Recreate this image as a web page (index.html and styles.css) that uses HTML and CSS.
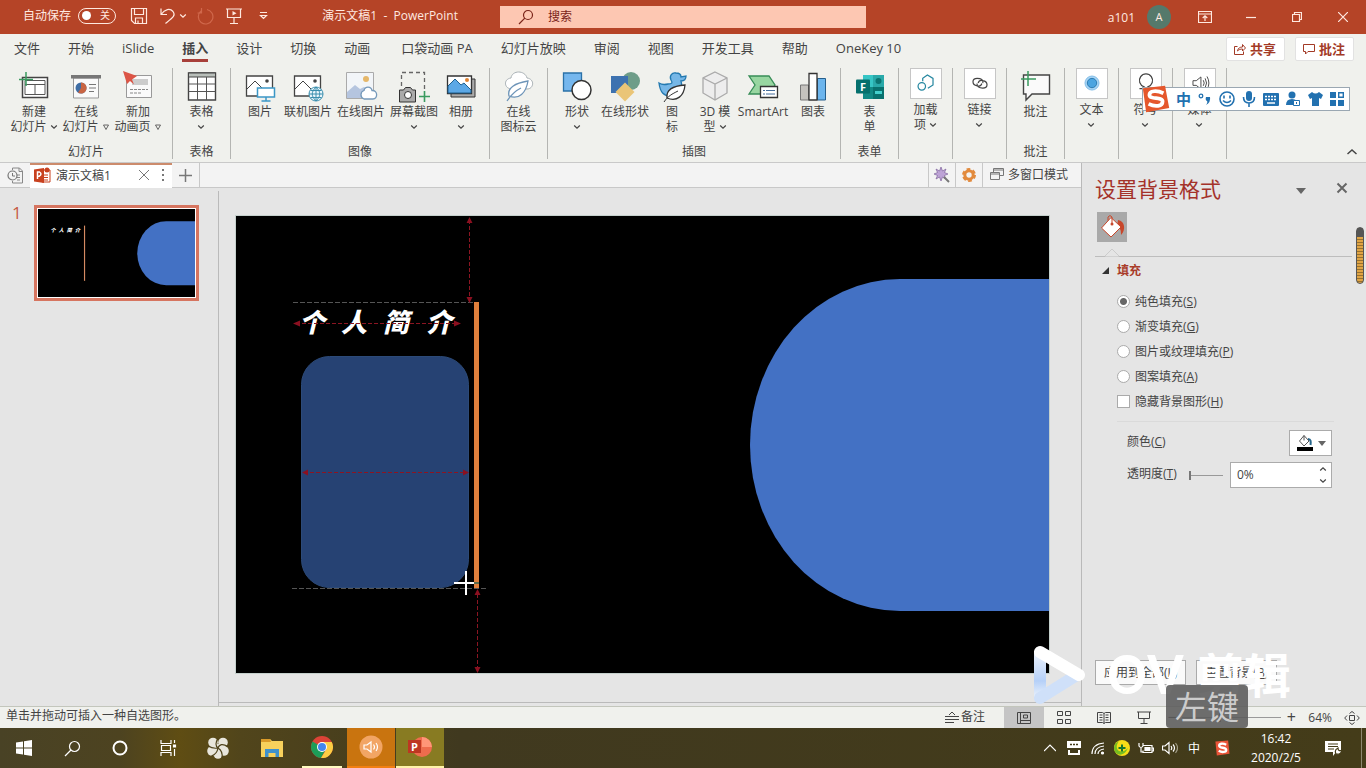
FILE: index.html
```html
<!DOCTYPE html>
<html lang="zh-CN">
<head>
<meta charset="utf-8">
<title>演示文稿1 - PowerPoint</title>
<link rel="stylesheet" href="styles.css">
</head>
<body>
<svg class="defs" aria-hidden="true">
  <symbol id="chev" viewBox="0 0 8 8"><path d="M1.200 2.500L4 5.200 6.800 2.500" fill="none" stroke="currentColor" stroke-width="1.200"/></symbol>
  <symbol id="tri" viewBox="0 0 8 8"><path d="M1.500 2h5L4 6.500z" fill="none" stroke="currentColor" stroke-width=".8"/></symbol>
</svg>

<header class="titlebar">
  <div class="quick">
    <span>自动保存</span>
    <label class="switch"><input type="checkbox" aria-label="自动保存"><span>关</span></label>
    <button class="tb save" aria-label="保存"><svg width="18" height="18" viewBox="0 0 18 18"><path d="M1.500 1.500h15v15h-12l-3-3zM4.500 1.500v6h9v-6M5.500 16.500v-5.500h7v5.500M8 16.500v-3" /></svg></button>
    <button class="tb undo" aria-label="撤消"><svg width="18" height="18" viewBox="0 0 18 18"><path d="M2 1.500v6h6M2 7.500C6 2 11 1 14 4.500c3 4 0 6-7.500 12"/></svg><svg class="chev" width="8" height="8"><use href="#chev"/></svg></button>
    <button class="tb redo" aria-label="恢复"><svg width="18" height="18" viewBox="0 0 18 18"><path d="M5.500 1v5h-4M11 2.500A7.300 7.300 0 1 1 5 4"/></svg></button>
    <button class="tb show" aria-label="从头开始"><svg width="18" height="18" viewBox="0 0 18 18"><path d="M1 2h16M2.500 2v8.500h13V2M9 10.500v6M5 16.500h8"/><path d="M7.500 4l4 2.200-4 2.300z" fill="currentColor" stroke="none"/></svg></button>
    <button class="tb" aria-label="自定义"><svg width="9" height="9" viewBox="0 0 9 9"><path d="M1 1.500h7M1.500 4.500l3 3 3-3z"/></svg></button>
    <h1>演示文稿1&nbsp; -&nbsp; PowerPoint</h1>
  </div>
  <label class="search"><svg width="16" height="16" viewBox="0 0 16 16"><circle cx="10" cy="6" r="4.500"/><path d="M6.800 9.200L1 15"/></svg><input type="text" placeholder="搜索" aria-label="搜索"></label>
  <div class="account">
    <span>a101</span><span class="avatar">A</span>
    <button class="win" aria-label="功能区显示选项"><svg width="14" height="12" viewBox="0 0 14 12"><path d="M.5.500h13v11H.5zM.5 3h13M7 10V5M4.700 7L7 4.800 9.300 7"/></svg></button>
    <button class="win" aria-label="最小化"><svg width="10" height="10" viewBox="0 0 10 10"><path d="M0 5.500h10"/></svg></button>
    <button class="win" aria-label="还原"><svg width="10" height="10" viewBox="0 0 10 10"><path d="M.5 2.500h7v7h-7zM2.500 2.500v-2h7v7h-2"/></svg></button>
    <button class="win" aria-label="关闭"><svg width="10" height="10" viewBox="0 0 10 10"><path d="M0 0l10 10M10 0L0 10"/></svg></button>
  </div>
</header>

<nav class="tabs">
  <a href="#">文件</a><a href="#">开始</a><a href="#">iSlide</a><a href="#" class="on">插入</a><a href="#">设计</a><a href="#">切换</a><a href="#">动画</a><a href="#" class="wide">口袋动画 PA</a><a href="#">幻灯片放映</a><a href="#">审阅</a><a href="#">视图</a><a href="#">开发工具</a><a href="#">帮助</a><a href="#">OneKey 10</a>
  <div class="share">
    <button><svg width="12" height="12" viewBox="0 0 12 12"><path d="M3.500 3.500h-3v8h9V8.500M3.500 8c.5-3 2.500-4 5-4V1.500L11.500 5 8.500 8V6c-2 0-3.500.5-5 2z"/></svg>共享</button>
    <button><svg width="12" height="12" viewBox="0 0 12 12"><path d="M.5 1.500h11v7H5l-2.500 2.500V8.500h-2z"/></svg>批注</button>
  </div>
</nav>

<section class="ribbon" aria-label="插入">
  <div class="group g-slides">
    <div class="items">
      <button class="w52"><svg class="ico" viewBox="0 0 30 30"><path d="M3.500 6.500h25v20h-25z" fill="#fff" stroke="#444" stroke-width="1.500"/><path d="M6 9.500h20v14H6zM6 13.500h20M16 13.500v10" fill="none" stroke="#555"/><path d="M7 1v14M0 8.500h14" stroke="#3a9a5f" stroke-width="1.500"/></svg><span>新建<br>幻灯片 <svg class="mark"><use href="#chev"/></svg></span></button>
      <button class="w52"><svg class="ico" viewBox="0 0 30 30"><path d="M2.500 7h25v20h-25z" fill="#fafafa" stroke="#999"/><path d="M0 4h30v3.500H0z" fill="#777"/><circle cx="10" cy="17" r="5.500" fill="#3f6ea5"/><path d="M10 17V11.500a5.500 5.500 0 1 1-3 10z" fill="#c96442"/><path d="M18 13.500h7M18 17h7M18 20.500h5" stroke="#777"/></svg><span>在线<br>幻灯片 <svg class="mark"><use href="#tri"/></svg></span></button>
      <button class="w52"><svg class="ico" viewBox="0 0 30 30"><path d="M3.500 4.500h25v22h-25z" fill="#fafafa" stroke="#999"/><path d="M9 8h16v6H9z" fill="#ccc"/><path d="M7 18.500h18M7 22h12" stroke="#888" stroke-dasharray="3 1"/><path d="M0 0l14 5-5 3.500 2 5-4-3.500-3 3z" fill="#dc5546"/></svg><span>新加<br>动画页 <svg class="mark"><use href="#tri"/></svg></span></button>
    </div><div class="name">幻灯片</div>
  </div>
  <div class="group g58">
    <div class="items"><button class="w46"><svg class="ico" viewBox="0 0 30 30"><path d="M1.500 2h27v27h-27z" fill="#fff" stroke="#444" stroke-width="1.400"/><path d="M1.500 2h27v4h-27z" fill="#b9bfba" stroke="#444"/><path d="M1.500 13h27M1.500 20.500h27M10.500 6v23M19.500 6v23" stroke="#555"/></svg><span>表格<br><svg class="mark"><use href="#chev"/></svg></span></button></div><div class="name">表格</div>
  </div>
  <div class="group g-image">
    <div class="items">
      <button class="w46"><svg class="ico" viewBox="0 0 30 30"><path d="M1.500 5h26v20h-26z" fill="#fff" stroke="#444" stroke-width="1.300"/><path d="M2 18l8-8 9 9" fill="none" stroke="#444"/><circle cx="22" cy="10" r="1.800" fill="#444"/><path d="M12.500 17h17v9h-17z" fill="#fff" stroke="#3b97c6" stroke-width="1.500"/><path d="M21 26v4M16.500 30h9" stroke="#3b97c6" stroke-width="1.500"/></svg><span>图片</span></button>
      <button class="w50"><svg class="ico" viewBox="0 0 30 30"><path d="M1.500 5h26v20h-26z" fill="#fff" stroke="#444" stroke-width="1.300"/><path d="M2 18l8-8 9 9" fill="none" stroke="#444"/><circle cx="22" cy="10" r="1.800" fill="#444"/><circle cx="23" cy="23" r="7" fill="#e9f5fb" stroke="#3b8fae"/><path d="M16 23h14M17.500 19.500h11M17.500 26.500h11M23 16v14M23 16c-5 5-5 9 0 14M23 16c5 5 5 9 0 14" fill="none" stroke="#3b8fae"/></svg><span>联机图片</span></button>
      <button class="w56"><svg class="ico" viewBox="0 0 30 30"><path d="M.5 1.500h27v26H.5z" fill="#f2f5f8" stroke="#aaa"/><path d="M1 27v-6l8-7 5 4 4-2 8 5v6z" fill="#b5c5df"/><circle cx="20" cy="8" r="3" fill="#e5b76a"/><path d="M18 28a4.500 4.500 0 0 1 0-8.500c1-4.500 7-4.500 8 0 6-.5 6 8.500 1 8.500z" fill="#fff" stroke="#7599ba" stroke-width="1.300"/></svg><span>在线图片</span></button>
      <button class="w50"><svg class="ico" viewBox="0 0 30 30"><path d="M2.500 15V1.500h23V18" fill="none" stroke="#666" stroke-width="1.300" stroke-dasharray="4 3"/><path d="M.5 19h4l2-2.500h5l2 2.500h3v12H.5z" fill="#aaa" stroke="#333"/><circle cx="9" cy="24" r="3.500" fill="#fff" stroke="#333"/><path d="M25.500 20v11M20 25.500h11" stroke="#3a9a5f" stroke-width="1.600"/></svg><span>屏幕截图<br><svg class="mark"><use href="#chev"/></svg></span></button>
      <button class="w44"><svg class="ico" viewBox="0 0 30 30"><path d="M5 8h24v18H5z" fill="#aaa" stroke="#333"/><path d="M1.500 5h24v17.500h-24z" fill="#fff" stroke="#333" stroke-width="1.300"/><path d="M2 22v-7l7-7 6 6 3-2 7 7v3z" fill="#5ca8e6" stroke="#1e5f8d"/><circle cx="21" cy="9" r="2" fill="#df8333"/></svg><span>相册<br><svg class="mark"><use href="#chev"/></svg></span></button>
    </div><div class="name">图像</div>
  </div>
  <div class="group g58">
    <div class="items"><button class="w46"><svg class="ico" viewBox="0 0 30 30"><path d="M8 18c-8 0-9-10-1-11C8-1 21-1 23 7c8 1 7 11 0 11z" fill="#fff" stroke="#a9b1b5"/><path d="M5 25C3 17 11 12 24 10c-2 12-9 19-19 15z" fill="#fff" stroke="#6d94b8" stroke-width="1.300"/><path d="M3 30c4-6 8-10 14-13" fill="none" stroke="#6d94b8" stroke-width="1.300"/></svg><span>在线<br>图标云</span></button></div>
  </div>
  <div class="group g-illus">
    <div class="items">
      <button class="w48"><svg class="ico" viewBox="0 0 30 30"><path d="M1.500 2h18v18h-18z" fill="#75b7ee" stroke="#2a71a8" stroke-width="1.300"/><circle cx="19.500" cy="19" r="9.500" fill="#fff" stroke="#333" stroke-width="1.500"/></svg><span>形状<br><svg class="mark"><use href="#chev"/></svg></span></button>
      <button class="w48"><svg class="ico" viewBox="0 0 30 30"><circle cx="21" cy="10" r="9" fill="#6e9d89"/><path d="M1 5h17v17H1z" fill="#3d72b0"/><path d="M15 11.500L24.500 21 15 30.500 5.500 21z" fill="#eac577"/></svg><span>在线形状</span></button>
      <button class="w46"><svg class="ico" viewBox="0 0 30 30"><path d="M2 12c3 2 5 2 9 1 4 0 5-1 3-4-2-4 1-8 5-7 4 0 5 2 5 4l5-1c0 4-3 5-5 5 3 11-3 15-9 15C7 26 3 21 2 12z" fill="#76b7e7" stroke="#2379b0" stroke-width="1.300"/><path d="M10 27c-1-8 5-12 18-13-1 11-8 17-18 13z" fill="#fff" stroke="#333" stroke-width="1.300"/><path d="M7 31c4-6 8-8 14-11" fill="none" stroke="#333"/></svg><span>图<br>标</span></button>
      <button class="w40"><svg class="ico" viewBox="0 0 30 30"><path d="M15 1l12 6v15l-12 7-12-7V7z" fill="#ededed" stroke="#aaa" stroke-width="1.300"/><path d="M3 7l12 6 12-6M15 13v16" fill="none" stroke="#aaa" stroke-width="1.300"/></svg><span>3D 模<br>型 <svg class="mark"><use href="#chev"/></svg></span></button>
      <button class="w56"><svg class="ico" viewBox="0 0 30 30"><path d="M1 5h20l6 9-6 9H1l6-9z" fill="#98d6a1" stroke="#378d57" stroke-width="1.300"/><path d="M12.500 15.500h17v11h-17z" fill="#fff" stroke="#333" stroke-width="1.300"/><path d="M15 19.500h12M15 23h12" stroke="#446c9b" stroke-dasharray="2 1 9 0"/></svg><span>SmartArt</span></button>
      <button class="w44"><svg class="ico" viewBox="0 0 30 30"><path d="M2.500 14h8v15h-8z" fill="#c4c2be" stroke="#777"/><path d="M19.500 7.500h8V29h-8z" fill="#6cb5ed" stroke="#255f8c"/><path d="M11 2.500h8V29h-8z" fill="#fff" stroke="#333" stroke-width="1.300"/></svg><span>图表</span></button>
    </div><div class="name">插图</div>
  </div>
  <div class="group g58">
    <div class="items"><button class="w46"><svg class="ico" viewBox="0 0 30 30"><path d="M8 4h21v24H8z" fill="#29a9a9"/><path d="M8 4h10v12H8z" fill="#36c5c5"/><path d="M18 16h11v12H18z" fill="#08716e"/><path d="M8 16h10v12H8z" fill="#118985"/><circle cx="23.500" cy="10" r="3" fill="#0b7471"/><path d="M20 20h7v3h-7z" fill="#44d0cd"/><rect x="1" y="8.500" width="14" height="14" rx="1" fill="#05706d"/><text x="5" y="19.500" class="logo-f">F</text></svg><span>表<br>单</span></button></div><div class="name">表单</div>
  </div>
  <div class="group g54">
    <div class="items"><button class="small"><svg class="box" viewBox="0 0 32 31"><path d="M12.500 13V10l5-3.500 6 3.500v7l-5.500 3.500" fill="none" stroke="#2687a0" stroke-width="1.300"/><circle cx="11.500" cy="18.500" r="4" fill="none" stroke="#2687a0" stroke-width="1.300"/></svg><span>加载<br>项 <svg class="mark"><use href="#chev"/></svg></span></button></div>
  </div>
  <div class="group g54">
    <div class="items"><button class="small"><svg class="box" viewBox="0 0 32 31"><path d="M18 15.500a4 4 0 0 1-5 2.500c-6-1-6-8 0-8 4 0 7 1.500 6 5M14 15a4 4 0 0 1 5-2.500c6 1 6 8 0 8-4 0-7-2-6-5" fill="none" stroke="#444" stroke-width="1.300"/></svg><span>链接<br><svg class="mark"><use href="#chev"/></svg></span></button></div>
  </div>
  <div class="group g58">
    <div class="items"><button class="w46"><svg class="ico" viewBox="0 0 30 30"><path d="M2.500 4h26v19H11l-6 6v-6H2.500z" fill="#fafafa" stroke="#444" stroke-width="1.400"/><path d="M7 0v15M0 8h15" stroke="#3a9a5f" stroke-width="1.500"/></svg><span>批注</span></button></div><div class="name">批注</div>
  </div>
  <div class="group g54">
    <div class="items"><button class="small"><svg class="box" viewBox="0 0 32 31"><circle cx="16" cy="15" r="7.500" fill="#a8d4f4" stroke="#7fbbe6"/><circle cx="16" cy="15" r="5" fill="#4ba4e0" stroke="#2877ad"/></svg><span>文本<br><svg class="mark"><use href="#chev"/></svg></span></button></div>
  </div>
  <div class="group g54">
    <div class="items"><button class="small"><svg class="box" viewBox="0 0 32 31"><path d="M9 21h5v-2a7 7 0 1 1 4 0v2h5" fill="none" stroke="#444" stroke-width="1.400"/></svg><span>符号<br><svg class="mark"><use href="#chev"/></svg></span></button></div>
  </div>
  <div class="group g54">
    <div class="items"><button class="small"><svg class="box" viewBox="0 0 32 31"><path d="M8.500 12.500v5h3.500l5 4V8.500l-5 4zM19.500 12q2 3 0 6M21.500 10q3 5 0 10M23.500 8q4 7 0 14" fill="none" stroke="#444"/></svg><span>媒体<br><svg class="mark"><use href="#chev"/></svg></span></button></div>
  </div>
  <button class="fold" aria-label="折叠功能区"><svg width="12" height="8" viewBox="0 0 12 8"><path d="M1.500 6L6 2l4.500 4" fill="none" stroke="#444" stroke-width="1.500"/></svg></button>
</section>

<main class="work">
  <div class="editor">
    <div class="docbar">
      <button class="recent" aria-label="最近"><svg width="17" height="17" viewBox="0 0 17 17"><path d="M5.500 3V1h7l3 3v12h-10v-2M12 1v3.500h3.500M10 8h3M10 10.500h3M10 13h3" fill="none" stroke="#888"/><circle cx="5.500" cy="8.500" r="4.500" fill="#f4f4f4" stroke="#777" stroke-width="1.200"/><path d="M5.500 6v3h2.500" fill="none" stroke="#777"/></svg></button>
      <div class="doc">
        <svg width="17" height="17" viewBox="0 0 17 17"><path d="M8 3h8v12H8z" fill="#fff" stroke="#c8411f"/><path d="M10 8h4M10 10.500h4M10 13h4" stroke="#c8411f"/><circle cx="13" cy="3" r="2.500" fill="#c8411f"/><path d="M0 2.500L10 1v15L0 14.500z" fill="#c8411f"/><path d="M3.500 12V5h2q3 2-.2 4.200H3.500" fill="none" stroke="#fff" stroke-width="1.500"/></svg>
        <span>演示文稿1</span>
        <button aria-label="关闭标签"><svg width="12" height="12" viewBox="0 0 12 12"><path d="M1 1l10 10M11 1L1 11" stroke="#777"/></svg></button>
        <button aria-label="更多"><svg width="4" height="12" viewBox="0 0 4 12"><path d="M1 0h2v2H1zM1 5h2v2H1zM1 10h2v2H1z" fill="#777"/></svg></button>
      </div>
      <button class="add" aria-label="新建标签"><svg width="13" height="13" viewBox="0 0 13 13"><path d="M6.500 0v13M0 6.500h13" stroke="#777" stroke-width="1.500"/></svg></button>
      <button class="tool first" aria-label="工具"><svg width="16" height="16" viewBox="0 0 16 16"><path d="M7 0l1.500 4L12 2l-1.500 3.500L14 7l-3.500 1.500 1 3.500-3-2L7 14l-1.500-4L2 12l1.500-3.500L0 7l3.500-1.500L2 2l3.500 2z" fill="#bda3d6" stroke="#80649c" stroke-width=".7"/><path d="M10 10l5 5" stroke="#777" stroke-width="2"/></svg></button>
      <button class="tool" aria-label="设置"><svg width="16" height="16" viewBox="0 0 16 16"><circle cx="8" cy="8" r="4.200" fill="none" stroke="#e28a3d" stroke-width="3"/><circle cx="8" cy="8" r="5.800" fill="none" stroke="#e28a3d" stroke-width="2.400" stroke-dasharray="3.600 2.470"/></svg></button>
      <button class="multi"><svg width="14" height="12" viewBox="0 0 14 12"><path d="M3.500 4V.5h10v7H10M3.500 2h10M.5 4.500h9v7h-9zM.5 6h9" fill="none" stroke="#777"/></svg>多窗口模式</button>
    </div>
    <div class="panes">
      <aside class="thumbs">
        <span>1</span>
        <button class="thumb" aria-label="幻灯片 1"><svg viewBox="0 0 813 457"><path d="M0 0h813v457H0z"/><path d="M813 63H664a150 166 0 0 0 0 332h149z" fill="#4371c4"/><path d="M238 86h6v286h-6z" fill="#d58a62"/><text class="art" x="65 107 149 191" y="117">个人简介</text></svg></button>
      </aside>
      <div class="canvas">
        <svg class="slide" viewBox="0 0 813 457">
          <path d="M0 0h813v457H0z"/>
          <path d="M813 63H664a150 166 0 0 0 0 332h149z" fill="#4371c4"/>
          <path d="M238 86h5v286h-5z" fill="#df7f3c"/>
          <rect x="65.500" y="140.500" width="167" height="231" rx="28" fill="#264273" stroke="#2c4a78"/>
          <text class="art" x="63 105 147 190" y="116">个人简介</text>
          <path d="M57 86.500h181M56 372.500h194" stroke="#555" stroke-dasharray="5 2"/>
          <g stroke="#8b1522" stroke-dasharray="4 2"><path d="M233.500 4v80M241.500 378v76M60 107.500h162M68 256.500h164" fill="none"/></g>
          <path fill="#8b1020" d="M233.500 1l3 6h-6zM233.500 87l3-6h-6zM241.500 373l3 6h-6zM241.500 457l3-6h-6zM57 107.500l7-3v6zM225 107.500l-7-3v6zM66 256.500l6-3v6zM233 256.500l-6-3v6z"/>
          <path d="M218 367h22M230 355v24" stroke="#fff" stroke-width="2"/>
          <path d="M238 367h5" stroke="#5b6b4c" stroke-width="2"/>
        </svg>
      </div>
    </div>
  </div>

  <aside class="format">
    <div class="head"><h2>设置背景格式</h2><button aria-label="选项"><svg width="10" height="6" viewBox="0 0 10 6"><path d="M0 0h10L5 6z" fill="#666"/></svg></button><button aria-label="关闭窗格"><svg width="12" height="12" viewBox="0 0 12 12"><path d="M1.500 1.500l9 9M10.500 1.500l-9 9" stroke="#666" stroke-width="2"/></svg></button></div>
    <button class="bucket" aria-label="填充"><svg width="30" height="30" viewBox="0 0 30 30"><path d="M21 8c7 1 8 10 3 15 0-6-1-7-4-8z" fill="#c8472b"/><path d="M14 5.500L24 15 14 25 4.500 16z" fill="#fff" stroke="#c8472b"/><path d="M11 8.500V5q2-3 4 0v6" fill="none" stroke="#c8472b"/><circle cx="15" cy="12" r="1.500" fill="#c8472b"/></svg></button>
    <svg class="notch" width="14" height="9" viewBox="0 0 14 9"><path d="M0 8.500L7 1l7 7.500z" fill="#e5e5e5"/><path d="M0 8L7 1l7 7" fill="none" stroke="#ccc"/></svg>
    <h3><svg width="8" height="8" viewBox="0 0 8 8"><path d="M7 0v7H0z" fill="#333"/></svg>填充</h3>
    <div class="choices">
      <label><input type="radio" name="fill" checked><span>纯色填充(<u>S</u>)</span></label>
      <label><input type="radio" name="fill"><span>渐变填充(<u>G</u>)</span></label>
      <label><input type="radio" name="fill"><span>图片或纹理填充(<u>P</u>)</span></label>
      <label><input type="radio" name="fill"><span>图案填充(<u>A</u>)</span></label>
      <label><input type="checkbox"><span>隐藏背景图形(<u>H</u>)</span></label>
    </div>
    <div class="props">
      <div class="row"><span>颜色(<u>C</u>)</span><button class="swatch" aria-label="颜色"><svg width="18" height="18" viewBox="0 0 18 18"><path d="M8 1.500L13 7l-5 5-4.500-5zM8 1.500v5" fill="#fff" stroke="#555"/><path d="M12 5c3 0 3 3 2.500 6" fill="none" stroke="#24658a" stroke-width="2"/><path d="M1 13h16v4H1z"/></svg><svg width="8" height="5" viewBox="0 0 8 5"><path d="M0 0h8L4 5z" fill="#666"/></svg></button></div>
      <div class="row"><label for="alpha">透明度(<u>T</u>)</label><input id="alpha" type="range" value="0" class="range"><div class="spin"><input type="text" value="0%" aria-label="透明度"><div><button aria-label="增加"><svg width="8" height="8" class="up"><use href="#chev"/></svg></button><button aria-label="减少"><svg width="8" height="8"><use href="#chev"/></svg></button></div></div></div>
    </div>
    <div class="apply"><button>应用到全部(<u>L</u>)</button><button>重置背景(<u>B</u>)</button></div>
  </aside>
</main>

<footer class="status">
  <span class="hint">单击并拖动可插入一种自选图形。</span>
  <button class="notes"><svg width="14" height="12" viewBox="0 0 14 12"><path d="M0 5.500h14M0 8.500h14M0 11.500h9M4 4l3-3 3 3"/></svg>备注</button>
  <button class="view on" aria-label="普通视图"><svg width="14" height="12" viewBox="0 0 14 12"><path d="M.5.500h13v11H.5zM3.500.500v11M3.500 8.500h10M6.500 3h4v3h-4z"/></svg></button>
  <button class="view" aria-label="幻灯片浏览"><svg width="14" height="13" viewBox="0 0 14 13"><path d="M.5.500h5v4h-5zM8.500.500h5v4h-5zM.5 8.500h5v4h-5zM8.500 8.500h5v4h-5z"/></svg></button>
  <button class="view" aria-label="阅读视图"><svg width="14" height="12" viewBox="0 0 14 12"><path d="M.5.500h5L7 1.500 8.500.500h5v10h-5L7 11.500l-1.500-1h-5zM7 1.500v10M2.500 3h3M2.500 5.500h3M2.500 8h3M8.500 3h3M8.500 5.500h3M8.500 8h3"/></svg></button>
  <button class="view" aria-label="放映"><svg width="14" height="13" viewBox="0 0 14 13"><path d="M0 1h14M1.500 1v6.500h11V1M7 7.500v5M3.500 12.500h7"/></svg></button>
  <div class="zoom"><button aria-label="缩小">−</button><input type="range" value="38" class="range" aria-label="缩放"><button aria-label="放大">+</button><span>64%</span><button aria-label="适应窗口"><svg width="16" height="14" viewBox="0 0 16 14"><path d="M5.500 4.500h5v5h-5zM5.500 2.500L8 .5l2.500 2M5.500 11.500L8 13.500l2.500-2M3 4.500L.7 7 3 9.500M13 4.500L15.300 7 13 9.500"/></svg></button></div>
</footer>

<footer class="taskbar">
  <button aria-label="开始"><svg width="16" height="16" viewBox="0 0 16 16"><path d="M0 2.500L7 1.500v6H0zM8 1.300L16 0v7.500H8zM0 8.500h7v6L0 13.500zM8 8.500h8V16l-8-1.200z" fill="#fff" stroke="none"/></svg></button>
  <button aria-label="搜索"><svg width="17" height="17" viewBox="0 0 17 17"><circle cx="10.500" cy="6.500" r="5" /><path d="M7 10L1 16"/></svg></button>
  <button aria-label="Cortana"><svg width="16" height="16" viewBox="0 0 16 16"><circle cx="8" cy="8" r="6.500" stroke-width="2"/></svg></button>
  <button aria-label="任务视图"><svg width="17" height="16" viewBox="0 0 17 16"><path d="M1 0v3.500h10V0M1 16v-3.500h10V16M1.500 5.500h9v5h-9zM14.500 0v3M14.500 9v7"/><path d="M13.500 5h2v2h-2z" fill="#fff"/></svg></button>
  <button class="w52" aria-label="应用"><svg width="22" height="22" viewBox="0 0 22 22"><g fill="#e8e6dc" stroke="none"><circle cx="6" cy="5.500" r="4.800"/><circle cx="16" cy="5.500" r="4.800"/><circle cx="5" cy="14" r="4.800"/><circle cx="17" cy="14" r="4.800"/><circle cx="11" cy="17.300" r="4.500"/><circle cx="11" cy="11" r="4"/></g><path d="M11 11Q7 8 11 1M11 11q2-6 10-1.500M11 11q5 3 4 10M11 11q-1 6-6.500 8M11 11Q6 12 1 9" stroke="#4e431c"/></svg></button>
  <button class="w56" aria-label="文件资源管理器"><svg width="22" height="20" viewBox="0 0 22 20"><g stroke="none"><path d="M0 1h9l2 2h11v16H0z" fill="#f8d15c"/><path d="M0 1h9l1 3H0z" fill="#db9b29"/><path d="M4 19v-8h14v8h-3.500v-4h-7v4z" fill="#3f91cc"/></g></svg></button>
  <button class="chrome" aria-label="Chrome"><svg width="22" height="22" viewBox="0 0 22 22"><g stroke="none"><circle cx="11" cy="11" r="11" fill="#dc4337"/><path d="M11 11L1.500 5.500A11 11 0 0 0 10 22l5-9z" fill="#1c9d58"/><path d="M11 6h9.700A11 11 0 0 1 10 22l5.500-9z" fill="#fdce43"/><circle cx="11" cy="11" r="5" fill="#fff"/><circle cx="11" cy="11" r="4" fill="#4587ed"/></g></svg></button>
  <button class="audio" aria-label="音频"><svg width="24" height="24" viewBox="0 0 24 24"><circle cx="12" cy="12" r="11.500" fill="#f2a564" stroke="none"/><path d="M5 10v4h3l4 3V7L8 10zM14.500 9.500q2 2.500 0 5M17 8q3 4 0 8"/></svg></button>
  <button class="ppt" aria-label="PowerPoint"><svg width="24" height="20" viewBox="0 0 24 20"><circle cx="14" cy="10" r="10" fill="#ee6c4d" stroke="none"/><path d="M14 0a10 10 0 0 1 10 10H14z" fill="#ff9678" stroke="none"/><path d="M0 3h13v13H0z" fill="#bd3722" stroke="none"/><text x="3" y="13.500" class="logo-p">P</text></svg></button>
  <div class="tray">
    <button aria-label="显示隐藏的图标"><svg width="12" height="8" viewBox="0 0 12 8"><path d="M0 7l6-6 6 6"/></svg></button>
    <button aria-label="输入"><svg width="14" height="14" viewBox="0 0 14 14"><path d="M0 0h14v7H0zM1 9h2v3h8V9h2v5H1z" fill="#fff" stroke="none"/><path d="M3 3.500h2M6 3.500h2M9 3.500h2" stroke="#443c19" stroke-width="1.500"/></svg></button>
    <button aria-label="网络"><svg width="14" height="13" viewBox="0 0 14 13"><path d="M1 12Q1 2 13 1M4 12q0-7 9-8M7 12q0-4 6-5"/><circle cx="11.500" cy="11" r="1" fill="#fff"/></svg></button>
    <button aria-label="安全"><svg width="16" height="16" viewBox="0 0 16 16"><circle cx="8" cy="8" r="8" fill="#f7dd18" stroke="none"/><path d="M2 3a8 8 0 0 0 0 10c5 4 10 0 12-5 0 0-4 5-9 3C2 9 2 5 5 1z" fill="#75bd21" stroke="none"/><path d="M8 4.500v7M4.500 8h7" stroke="#17762d" stroke-width="2"/></svg></button>
    <button aria-label="电池"><svg width="16" height="12" viewBox="0 0 16 12"><path d="M5 3.500h9v7H5v-2M14 6h1.500v3H14M1 1v3q2 3 4 0V1M3 5v5h2"/><path d="M7 5.500h5v3H7z" fill="#fff"/></svg></button>
    <button aria-label="音量"><svg width="16" height="14" viewBox="0 0 16 14"><path d="M.5 5v4h2.500l4 3.500v-11L3 5zM9 5q1.500 2 0 4M11 3.500q3 3.500 0 7"/><path d="M13.500 2q4 5 0 10" stroke="#a29d87"/></svg></button>
    <button>中</button>
    <button class="sg" aria-label="搜狗输入法"><svg width="16" height="16" viewBox="0 0 34 34"><path d="M3 3l27-2 3 28-27 4z" fill="#ea5438" stroke="none"/><path d="M26 10C18 6 11 8 11 12c0 6 15 3 15 9 0 5-9 6-16 2" stroke-width="5"/></svg></button>
    <time>16:42<br>2020/2/5</time>
    <button class="note" aria-label="通知"><svg width="17" height="17" viewBox="0 0 17 17"><path d="M0 1h16v11h-5l-3 4v-4H0z" fill="#fff" stroke="none"/><path d="M3 4h10M3 6.500h10M3 9h6" stroke="#443c19"/><path d="M11 14q-2-4 2-6 0 4 4 2-1 5-6 4z" fill="#fff" stroke="#443c19"/></svg></button>
  </div>
</footer>

<div class="ime">
  <svg class="s-logo" width="28" height="28" viewBox="0 0 34 34"><path d="M1 4l27-3 5 27-28 5z" fill="#e5572c"/><path d="M26 10C18 6 9 7 9 12c0 6 16 2 16 8 0 6-9 7-17 3" fill="none" stroke="#fff" stroke-width="4.500"/></svg>
  <b>中</b>
  <svg width="14" height="14" viewBox="0 0 14 14"><circle cx="3" cy="4" r="1.800" fill="none" stroke="#2271b0" stroke-width="1.300"/><path d="M8 5h4q1 5-4 8 2-3 1-4-2-1-1-4z" fill="#2271b0"/></svg>
  <svg width="16" height="16" viewBox="0 0 16 16"><circle cx="8" cy="8" r="7" fill="none" stroke="#2271b0" stroke-width="1.600"/><path d="M5 4.500v3M11 4.500v3M4 9.500q4 4 8 0" fill="none" stroke="#2271b0" stroke-width="1.600"/></svg>
  <svg width="14" height="16" viewBox="0 0 14 16"><rect x="4" y="0" width="6" height="10" rx="3" fill="#2271b0"/><path d="M1.500 6q0 6 5.500 6t5.500-6M7 12v4" fill="none" stroke="#2271b0" stroke-width="1.600"/></svg>
  <svg width="16" height="13" viewBox="0 0 16 13"><rect width="16" height="13" rx="1" fill="#2271b0"/><path d="M2 3.500h12M2 6.500h12" stroke="#fff" stroke-width="1.600" stroke-dasharray="2 1"/><path d="M4 10h8" stroke="#fff" stroke-width="1.500"/></svg>
  <svg width="15" height="16" viewBox="0 0 15 16"><circle cx="6" cy="4" r="3.500" fill="#2271b0"/><path d="M0 14q0-6 6-6t6 6z" fill="#2271b0"/><path d="M7.500 9.500h6v5h-6z" fill="#fff" stroke="#2271b0"/><path d="M10.500 11v2" stroke="#2271b0"/></svg>
  <svg width="15" height="14" viewBox="0 0 15 14"><path d="M4 0q3.500 3 7 0l4 3-2 4-2-1v8H4V6L2 7 0 3z" fill="#2271b0"/></svg>
  <svg width="14" height="14" viewBox="0 0 14 14"><path d="M0 0h6v6H0zM0 8h6v6H0zM8 8h6v6H8z" fill="#2271b0"/><path d="M8.700.7h4.600v4.600H8.700z" fill="none" stroke="#2271b0" stroke-width="1.400"/></svg>
</div>
<div class="meter"></div>
<div class="brand">
  <svg width="52" height="60" viewBox="0 0 52 60"><defs><linearGradient id="bl" x1="0" y1="0" x2="0" y2="1"><stop offset="0" stop-color="#eef4fc"/><stop offset=".65" stop-color="#b5d0f8"/><stop offset="1" stop-color="#e9f1fc"/></linearGradient></defs><path d="M0 6h12v46H0z" fill="url(#bl)"/><path d="M6 53l37-23" stroke="#cfe0f9" stroke-width="12" stroke-linecap="round"/><path d="M6 7l39 23" stroke="#fff" stroke-width="12" stroke-linecap="round"/></svg>
  <span class="ov">OV</span><span class="cut">剪辑</span>
</div>
<div class="keycap">左键</div>
</body>
</html>
```
FILE: styles.css
```css
* { box-sizing: border-box; }
body { margin: 0; height: 100vh; display: flex; flex-direction: column; overflow: hidden; position: relative; font: 12px/15px "Open Sans", "Noto Sans CJK SC", sans-serif; color: #444; background: #e5e5e5; }
button, input { font: inherit; color: inherit; margin: 0; }
button { border: 0; padding: 0; background: none; }
h1, h2, h3 { margin: 0; font-weight: 400; }
a { color: inherit; text-decoration: none; }
svg { flex: none; }
.defs { position: absolute; width: 0; height: 0; }

/* title bar */
.titlebar { flex: none; height: 34px; display: grid; grid-template-columns: 500fr 366fr 500fr; align-items: center; background: #b54427; color: #ffe9e0; }
.titlebar svg { fill: none; stroke: currentColor; stroke-width: 1.2; }
.quick { display: flex; align-items: center; padding: 0 42px 3px 23px; white-space: nowrap; }
.quick h1 { font-size: 12px; margin-left: auto; }
.switch { display: flex; align-items: center; justify-content: space-between; width: 38px; height: 16px; margin: 0 14px 0 7px; padding: 0 5px 0 3px; border: 1px solid #ffe9e0; border-radius: 8px; font-size: 10px; }
.switch input { appearance: none; width: 9px; height: 9px; border-radius: 50%; background: #fff; }
.tb { display: flex; align-items: center; }
.tb.save, .tb.redo { margin-right: 11px; }
.tb.undo { gap: 2px; margin-right: 9px; }
.tb.redo { color: #d0684c; }
.tb.show { margin-right: 16px; }
.search { height: 22px; display: flex; align-items: center; gap: 14px; padding-left: 18px; background: #fdc7b2; color: #7a2419; }
.search input { flex: 1; min-width: 0; border: 0; padding: 0 0 2px; background: none; }
.search input::placeholder { color: #7a2419; opacity: 1; }
.account { display: flex; align-items: center; justify-content: flex-end; }
.avatar { width: 24px; height: 24px; margin: 0 11px 0 12px; border-radius: 50%; background: #55796b; text-align: center; line-height: 24px; font-size: 11px; }
.win { width: 46px; height: 34px; display: grid; place-items: center; }

/* menu */
.tabs { flex: none; height: 28px; display: flex; gap: 28px; padding: 0 12px 0 14px; background: #f0f1ed; font-size: 13px; line-height: 28px; white-space: nowrap; }
.tabs .on { font-weight: 700; border-bottom: 3px solid #a8403a; }
.tabs .wide { margin-left: 3px; }
.share { margin-left: auto; display: flex; gap: 10px; padding-top: 3px; height: 27px; }
.share button { display: flex; align-items: center; gap: 4px; padding: 0 8px 0 7px; background: #fff; border: 1px solid #e2e2e2; border-radius: 2px; color: #a33a26; font-weight: 700; line-height: 20px; }
.share svg { fill: none; stroke: currentColor; }

/* ribbon */
.ribbon { flex: none; height: 101px; display: flex; padding: 6px 0 3px; background: #f0f1ed; border-bottom: 1px solid #c9c9c9; }
.group { display: flex; flex-direction: column; flex: none; border-right: 1px solid #b4b5b2; }
.g-slides { width: 173px; } .g-image { width: 259px; } .g-illus { width: 293px; } .g58 { width: 58px; } .g54 { width: 54px; }
.items { flex: 1; display: flex; justify-content: center; align-items: flex-start; }
.items button { display: flex; flex-direction: column; align-items: center; flex: none; white-space: nowrap; }
.name { height: 15px; text-align: center; line-height: 15px; }
.ico { width: 30px; height: 30px; margin: 3px 0; overflow: visible; }
.box { width: 32px; height: 31px; margin-bottom: 3px; background: #fff; border: 1px solid #c6c6c6; }
.mark { width: 8px; height: 8px; }
.w40 { width: 40px; } .w44 { width: 44px; } .w46 { width: 46px; } .w48 { width: 48px; } .w50 { width: 50px; } .w52 { width: 52px; } .w56 { width: 56px; }
.logo-f, .logo-p { font: 700 11px "Open Sans", sans-serif; fill: #fff; stroke: none; }
.fold { margin: auto 8px 0 auto; }

/* work area */
.work { flex: 1; min-height: 0; display: flex; }
.editor { flex: 1; min-width: 0; display: flex; flex-direction: column; }
.docbar { height: 25px; flex: none; display: flex; background: #f3f3f3; border-bottom: 1px solid #c8c8c8; }
.docbar button { display: flex; align-items: center; justify-content: center; }
.recent { width: 30px; }
.doc { width: 142px; height: 25px; display: flex; align-items: center; gap: 5px; padding: 0 7px 3px 4px; background: #fff; border-top: 2px solid #cc8b6c; }
.doc span { flex: 1; }
.doc button + button { margin-left: 6px; }
.add { width: 28px; border-right: 1px solid #c8c8c8; }
.tool { width: 27px; border-left: 1px solid #c8c8c8; }
.tool.first { margin-left: auto; }
.docbar .multi { width: 99px; gap: 4px; padding: 0 6px 2px 0; border-left: 1px solid #c8c8c8; }
.panes { flex: 1; display: flex; min-height: 0; padding-top: 3px; }
.thumbs { width: 219px; flex: none; display: flex; align-items: flex-start; gap: 12px; padding: 14px 0 0 12px; border-right: 1px solid #bababa; color: #c65b46; font-size: 17px; }
.thumb { width: 165px; border: 3px solid #d67560; padding: 1px; background: #fff; line-height: 0; }
.thumb svg { width: 100%; height: auto; }
.canvas { flex: 1; min-width: 0; padding: 25px 32px 0 17px; border-bottom: 1px solid #bababa; margin-bottom: 3px; }
.slide { display: block; width: 100%; height: auto; outline: 1px solid #c5d0cc; }
.art { font: oblique 900 26px "Noto Sans CJK SC", sans-serif; fill: #fff; }

/* format pane */
.format { width: 285px; flex: none; border-left: 1px solid #b9b9b9; padding: 13px 14px 21px 13px; display: flex; flex-direction: column; }
.head { display: flex; align-items: center; height: 27px; margin-right: 4px; }
.head h2 { flex: 1; font-size: 21px; line-height: 27px; color: #a4322a; }
.head button { margin-left: 30px; height: 26px; }
.bucket { width: 30px; height: 30px; margin: 9px 0 6px 2px; background: #a9a9a9; }
.notch { margin: 0 0 -1px 10px; position: relative; }
.format h3 { border-top: 1px solid #bdbdbd; padding: 6px 0 0 7px; font-size: 12px; font-weight: 700; color: #a93c2a; display: flex; align-items: center; gap: 7px; }
.choices { margin: 11px 18px 0 22px; padding-bottom: 7px; border-bottom: 1px solid #dadada; }
.choices label { display: flex; align-items: center; gap: 5px; height: 25px; }
.choices input { appearance: none; width: 13px; height: 13px; background: #fff; border: 1px solid #aaa; }
.choices input[type="radio"] { border-radius: 50%; }
.choices input:checked { background: radial-gradient(circle, #666 0 3px, #fff 4px); }
.props { padding: 8px 20px 0 32px; }
.row { display: flex; align-items: center; justify-content: space-between; height: 26px; margin-bottom: 6px; }
.row > span, .row > label { padding-bottom: 3px; }
.swatch { width: 43px; height: 26px; display: flex; align-items: center; justify-content: center; gap: 4px; background: #fff; border: 1px solid #ababab; }
.range { appearance: none; height: 12px; background: linear-gradient(#999, #999) center / 100% 1px no-repeat; }
.range::-webkit-slider-thumb { appearance: none; width: 2px; height: 9px; background: #777; }
.row .range { width: 34px; margin-left: 5px; }
.spin { width: 102px; height: 26px; display: flex; background: #fff; border: 1px solid #ababab; }
.spin input { flex: 1; min-width: 0; border: 0; padding: 0 6px 2px; background: none; }
.spin div { width: 16px; display: flex; flex-direction: column; justify-content: space-around; }
.spin button { height: 12px; line-height: 0; }
.up { transform: rotate(180deg); }
.apply { display: flex; gap: 10px; margin-top: auto; }
.apply button { height: 25px; padding: 0 8px; border: 1px solid #aaa; background: #fafafa; }

/* status bar */
.status { flex: none; height: 22px; display: flex; align-items: stretch; padding: 0 5px 0 6px; background: #f0f1ed; border-top: 1px solid #c3c6bc; }
.status svg { fill: none; stroke: #444; }
.status button { display: flex; align-items: center; justify-content: center; }
.hint { flex: 1; line-height: 18px; }
.notes { gap: 2px; margin-right: 19px; padding-bottom: 2px; }
.view { width: 40px; }
.view.on { background: #c5c5c5; }
.zoom { display: flex; align-items: center; width: 197px; gap: 4px; padding-left: 2px; }
.zoom .range { flex: 1; min-width: 0; margin: 0; }
.zoom button { width: 12px; font-size: 16px; }
.zoom span { margin-left: 7px; }
.zoom span + button { width: 18px; margin-left: 7px; }

/* taskbar */
.taskbar { flex: none; height: 40px; display: flex; color: #fff; background: linear-gradient(90deg, #494225 0, #4d4320 120px, #5f4d13 180px, #51451b 240px, #40391f 460px, #443c19 100%); }
.taskbar > button { width: 48px; display: grid; place-items: center; flex: none; }
.taskbar > .w52 { width: 52px; }
.taskbar > .w56 { width: 56px; }
.taskbar svg { fill: none; stroke: #fff; stroke-width: 1.2; }
.taskbar > .chrome { width: 40px; margin: 0 5px 0 2px; border-bottom: 2px solid #fffbc0; }
.taskbar > .audio { background: #c9740f; border-bottom: 2px solid #f27f12; margin-right: 1px; }
.taskbar > .ppt { background: #887b22; border-bottom: 2px solid #fff4a8; }
.tray { margin-left: auto; display: flex; align-items: center; padding-right: 4px; }
.tray button { width: 24px; display: grid; place-items: center; }
.tray .sg { width: 32px; }
.tray time { width: 76px; text-align: center; line-height: 19px; }
.tray .note { width: 38px; margin-right: 9px; }
.tray::after { content: ""; height: 40px; border-right: 1px solid #8d8870; }

/* floating items */
.ime { position: absolute; top: 87px; right: 16px; height: 24px; display: flex; align-items: center; gap: 7px; padding: 0 5px 0 33px; background: #fff; border: 1px solid #9aa7b2; color: #2271b0; font-size: 15px; }
.s-logo { position: absolute; left: -1px; top: -3px; }
.meter { position: absolute; right: 2px; top: 227px; width: 8px; height: 57px; border: 1px solid #555; border-radius: 4px; background: linear-gradient(#555 0 9px, transparent 9px), repeating-linear-gradient(#e0a444 0 2px, #97712f 2px 3px); }
.brand { position: absolute; right: 75px; bottom: 63px; display: flex; align-items: center; color: #fff; font-weight: 700; }
.ov { margin-left: 20px; font: 600 54px/60px "Inter", sans-serif; }
.cut { margin-left: 12px; font-size: 47px; line-height: 60px; }
.keycap { position: absolute; right: 118px; bottom: 40px; width: 82px; height: 43px; border-radius: 4px; background: rgba(90, 90, 90, .88); color: #ccc; font-size: 32px; line-height: 44px; text-align: center; }
```
